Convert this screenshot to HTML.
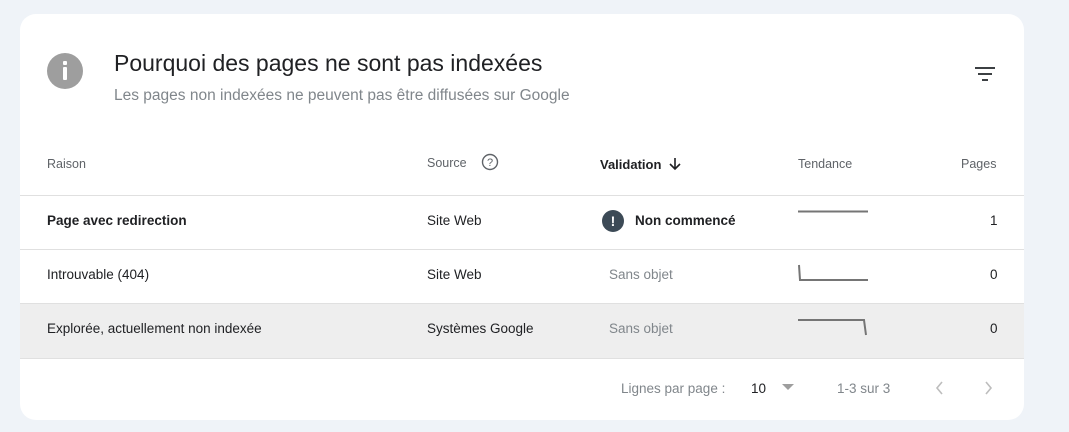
<!DOCTYPE html>
<html><head><style>
body{margin:0;width:1069px;height:432px;background:#eff3f8;font-family:"Liberation Sans",sans-serif;position:relative;overflow:hidden}
.card{position:absolute;left:20px;top:14px;width:1004px;height:406px;background:#fff;border-radius:16px;overflow:hidden}
.a{position:absolute;white-space:nowrap}
.hd{font-size:12.5px;color:#5f6368}
.c{font-size:13.5px;color:#202124}
.g{font-size:13.5px;color:#80868b}
.line{position:absolute;left:0;width:1004px;height:1px;background:#e0e0e0}
</style></head><body>
<div class="card">
<div class="a" style="left:27px;top:39px;width:36px;height:36px;border-radius:50%;background:#9e9e9e"></div>
<div class="a" style="left:43px;top:47px;width:4px;height:4px;background:#fff;border-radius:1px"></div>
<div class="a" style="left:43px;top:53px;width:4px;height:13px;background:#fff;border-radius:1px"></div>
<div class="a" style="left:94px;top:36px;font-size:23px;color:#202124">Pourquoi des pages ne sont pas indexées</div>
<div class="a" style="left:94px;top:73px;font-size:15.5px;color:#80868b">Les pages non indexées ne peuvent pas être diffusées sur Google</div>
<svg class="a" style="left:954px;top:52px" width="22" height="16"><path d="M1 2h20M4 8h14M8 14h6" stroke="#3c4043" stroke-width="2"/></svg>
<div class="a hd" style="left:27px;top:143px">Raison</div>
<div class="a hd" style="left:407px;top:142px">Source</div>
<svg class="a" style="left:461px;top:139px" width="18" height="18"><circle cx="9" cy="9" r="7.5" fill="none" stroke="#5f6368" stroke-width="1.4"/><text x="9" y="13" font-size="11" text-anchor="middle" fill="#5f6368" font-family="Liberation Sans">?</text></svg>
<div class="a" style="left:580px;top:143px;font-size:13px;color:#202124;font-weight:bold">Validation</div>
<svg class="a" style="left:648px;top:143px" width="14" height="14"><path d="M7 1v11M2 7l5 5 5-5" stroke="#202124" stroke-width="1.6" fill="none"/></svg>
<div class="a hd" style="left:778px;top:143px">Tendance</div>
<div class="a hd" style="left:941px;top:143px">Pages</div>
<div class="line" style="top:181px"></div>
<div class="a c" style="left:27px;top:199px;font-weight:bold">Page avec redirection</div>
<div class="a c" style="left:407px;top:199px">Site Web</div>
<div class="a" style="left:582px;top:196px;width:22px;height:22px;border-radius:50%;background:#3c4a56;color:#fff;font-weight:bold;font-size:14px;text-align:center;line-height:22px">!</div>
<div class="a c" style="left:615px;top:199px;font-weight:bold">Non commencé</div>
<svg class="a" style="left:776px;top:192px" width="75" height="10"><path d="M2 5.5h70" stroke="#757575" stroke-width="2"/></svg>
<div class="a c" style="left:970px;top:199px">1</div>
<div class="line" style="top:235px"></div>
<div class="a c" style="left:27px;top:253px">Introuvable (404)</div>
<div class="a c" style="left:407px;top:253px">Site Web</div>
<div class="a g" style="left:589px;top:253px">Sans objet</div>
<svg class="a" style="left:776px;top:248px" width="75" height="22"><path d="M3 3l1 15h68" stroke="#757575" stroke-width="2" fill="none"/></svg>
<div class="a c" style="left:970px;top:253px">0</div>
<div class="a" style="left:0;top:289px;width:1004px;height:54px;background:#eeeeee;border-top:1px solid #e0e0e0;border-bottom:1px solid #e0e0e0"></div>
<div class="a c" style="left:27px;top:307px">Explorée, actuellement non indexée</div>
<div class="a c" style="left:407px;top:307px">Systèmes Google</div>
<div class="a g" style="left:589px;top:307px">Sans objet</div>
<svg class="a" style="left:776px;top:302px" width="75" height="22"><path d="M2 4h66l2 15" stroke="#757575" stroke-width="2" fill="none"/></svg>
<div class="a c" style="left:970px;top:307px">0</div>
<div class="a g" style="left:601px;top:367px">Lignes par page :</div>
<div class="a c" style="left:731px;top:367px">10</div>
<svg class="a" style="left:762px;top:370px" width="12" height="8"><path d="M0 0h12L6 6z" fill="#9e9e9e"/></svg>
<div class="a g" style="left:817px;top:367px">1-3 sur 3</div>
<svg class="a" style="left:914px;top:366px" width="12" height="16"><path d="M8 2L3 8l5 6" stroke="#bdbdbd" stroke-width="1.6" fill="none"/></svg>
<svg class="a" style="left:962px;top:366px" width="12" height="16"><path d="M4 2l5 6-5 6" stroke="#bdbdbd" stroke-width="1.6" fill="none"/></svg>
</div>
</body></html>
